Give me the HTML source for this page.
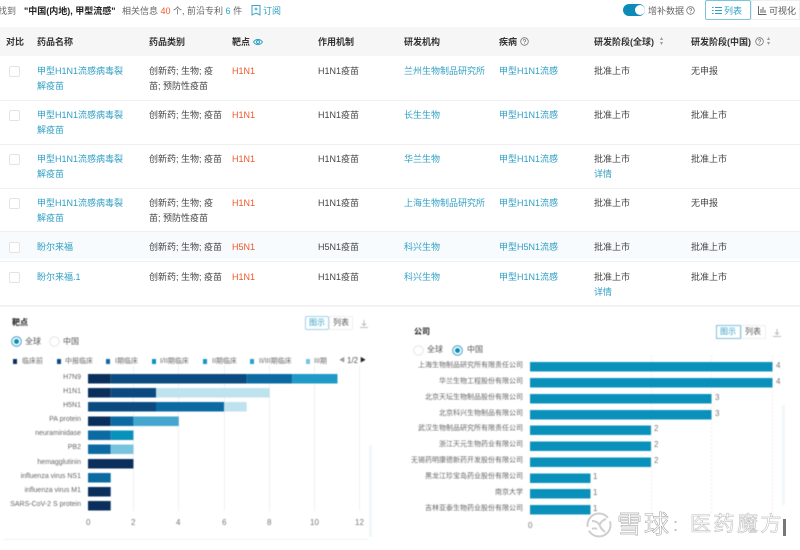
<!DOCTYPE html>
<html lang="zh"><head><meta charset="utf-8">
<style>
html,body{margin:0;padding:0;background:#fff}
body{width:800px;height:550px;overflow:hidden;position:relative;font-family:"Liberation Sans","Noto Sans CJK SC",sans-serif;font-size:9px;color:#444}
.t{position:absolute;white-space:nowrap;line-height:14px;height:14px;font-size:9px;margin-top:1px}
.b{color:#2f9fc4}.k{color:#444}.r{color:#f0562a}.h{font-weight:bold;color:#333}
.bx{position:absolute;box-sizing:border-box;left:9px;width:11px;height:11px;border:1px solid #e3e3e3;border-radius:2px;background:#fff}
.rect{position:absolute}
.c{filter:blur(.4px)}
.c .t{margin-top:0}
.c .t.s{font-size:8px}
.c .t.g{color:#666;font-size:7px;margin-top:1px}
.l{position:absolute;text-align:right;white-space:nowrap;font-size:7px;line-height:10px;color:#666}
.n{position:absolute;white-space:nowrap;font-size:8px;line-height:10px;color:#777}
.q{position:absolute;top:359px;width:4px;height:4.500px}
</style></head><body>

<!-- top bar -->
<div class="t" style="left:-2px;top:3px;color:#666">找到</div>
<div class="t" style="left:24px;top:3px;color:#222;font-weight:bold">"中国(内地), 甲型流感"</div>
<div class="t" style="left:122px;top:3px;color:#666">相关信息 <span style="color:#f0562a">40</span> 个, 前沿专利 <span style="color:#2f9fc4">6</span> 件</div>
<svg style="position:absolute;left:250px;top:4px" width="12" height="12" viewBox="0 0 12 12" fill="none" stroke="#3aa3c8"><path d="M2 1.500h8v9.500l-4-2-4 2z"/><path d="M6 3.500v3M4.500 5h3"/></svg>
<div class="t b" style="left:263px;top:3px">订阅</div>

<div class="rect" style="left:623px;top:4px;width:22px;height:12px;border-radius:6px;background:#0d8bb8"></div>
<div class="rect" style="left:635px;top:5px;width:10px;height:10px;border-radius:5px;background:#fff"></div>
<div class="t" style="left:648px;top:3px;color:#666">增补数据</div>
<svg style="position:absolute;left:686px;top:6px" width="9" height="9" viewBox="0 0 9 9" fill="none" stroke="#777" stroke-width=".8"><circle cx="4.500" cy="4.500" r="3.800"/><path d="M3.300 3.600c0-1.500 2.400-1.500 2.400 0 0 .9-1.200.9-1.200 1.800M4.500 6.200v.7"/></svg>
<div class="rect" style="left:705px;top:0;width:46px;height:20px;box-sizing:border-box;border:1px solid #7cc4dc;border-radius:2px"></div>
<svg style="position:absolute;left:712px;top:6px" width="10" height="9" viewBox="0 0 10 9" fill="none" stroke="#2f9fc4"><path d="M3 1.500h7M3 4.500h7M3 7.500h7M0 1.500h1.500M0 4.500h1.500M0 7.500h1.500"/></svg>
<div class="t b" style="left:724px;top:3px">列表</div>
<div class="rect" style="left:751px;top:0;width:49px;height:20px;box-sizing:border-box;border:1px solid #eee"></div>
<svg style="position:absolute;left:758px;top:6px" width="9" height="9" viewBox="0 0 9 9" fill="none" stroke="#666"><path d="M.5 0v8.500h8M3 3v4M5 1v6M7 4v3"/></svg>
<div class="t" style="left:769px;top:3px;color:#555">可视化</div>

<!-- table header -->
<div class="rect" style="left:0;top:27px;width:800px;height:29px;background:#f6f6f6"></div>
<div class="t h" style="left:6px;top:34px">对比</div>
<div class="t h" style="left:37px;top:34px">药品名称</div>
<div class="t h" style="left:149px;top:34px">药品类别</div>
<div class="t h" style="left:232px;top:34px">靶点</div>
<svg style="position:absolute;left:253px;top:38px" width="10" height="8" viewBox="0 0 10 8" fill="none" stroke="#2f9fc4"><path d="M.5 4C3 .5 7 .5 9.500 4 7 7.500 3 7.500.5 4z"/><circle cx="5" cy="4" r="1.500"/></svg>
<div class="t h" style="left:318px;top:34px">作用机制</div>
<div class="t h" style="left:404px;top:34px">研发机构</div>
<div class="t h" style="left:499px;top:34px">疾病</div>
<svg style="position:absolute;left:520px;top:37px" width="9" height="9" viewBox="0 0 9 9" fill="none" stroke="#777" stroke-width=".8"><circle cx="4.500" cy="4.500" r="3.800"/><path d="M3.300 3.600c0-1.500 2.400-1.500 2.400 0 0 .9-1.200.9-1.200 1.800M4.500 6.200v.7"/></svg>
<div class="t h" style="left:594px;top:34px">研发阶段(全球)</div>
<div class="t" style="left:660px;top:36px;font-size:6px;color:#999;line-height:5px;height:10px">▴<br>▾</div>
<div class="t h" style="left:691px;top:34px">研发阶段(中国)</div>
<svg style="position:absolute;left:755px;top:37px" width="9" height="9" viewBox="0 0 9 9" fill="none" stroke="#777" stroke-width=".8"><circle cx="4.500" cy="4.500" r="3.800"/><path d="M3.300 3.600c0-1.500 2.400-1.500 2.400 0 0 .9-1.200.9-1.200 1.800M4.500 6.200v.7"/></svg>
<div class="t" style="left:767px;top:36px;font-size:6px;color:#999;line-height:5px;height:10px">▴<br>▾</div>

<!-- row backgrounds/lines -->
<div class="rect" style="left:0;top:232px;width:800px;height:27px;background:#f7fbfd"></div>
<div class="rect" style="left:0;top:100px;width:800px;height:1px;background:#f0f0f0"></div>
<div class="rect" style="left:0;top:144px;width:800px;height:1px;background:#f0f0f0"></div>
<div class="rect" style="left:0;top:188px;width:800px;height:1px;background:#f0f0f0"></div>
<div class="rect" style="left:0;top:231px;width:800px;height:1px;background:#f0f0f0"></div>
<div class="rect" style="left:0;top:261px;width:800px;height:1px;background:#f0f0f0"></div>
<div class="rect" style="left:0;top:305px;width:800px;height:2px;background:#f2f2f2"></div>

<!-- row 1 -->
<div class="bx" style="top:66px"></div>
<div class="t b" style="left:37px;top:63px">甲型H1N1流感病毒裂</div><div class="t b" style="left:37px;top:78px">解疫苗</div>
<div class="t k" style="left:149px;top:63px">创新药; 生物; 疫</div><div class="t k" style="left:149px;top:78px">苗; 预防性疫苗</div>
<div class="t r" style="left:232px;top:63px">H1N1</div><div class="t k" style="left:318px;top:63px">H1N1疫苗</div>
<div class="t b" style="left:404px;top:63px">兰州生物制品研究所</div><div class="t b" style="left:499px;top:63px">甲型H1N1流感</div>
<div class="t k" style="left:594px;top:63px">批准上市</div><div class="t k" style="left:691px;top:63px">无申报</div>

<!-- row 2 -->
<div class="bx" style="top:110px"></div>
<div class="t b" style="left:37px;top:107px">甲型H1N1流感病毒裂</div><div class="t b" style="left:37px;top:122px">解疫苗</div>
<div class="t k" style="left:149px;top:107px">创新药; 生物; 疫苗</div>
<div class="t r" style="left:232px;top:107px">H1N1</div><div class="t k" style="left:318px;top:107px">H1N1疫苗</div>
<div class="t b" style="left:404px;top:107px">长生生物</div><div class="t b" style="left:499px;top:107px">甲型H1N1流感</div>
<div class="t k" style="left:594px;top:107px">批准上市</div><div class="t k" style="left:691px;top:107px">批准上市</div>

<!-- row 3 -->
<div class="bx" style="top:154px"></div>
<div class="t b" style="left:37px;top:151px">甲型H1N1流感病毒裂</div><div class="t b" style="left:37px;top:166px">解疫苗</div>
<div class="t k" style="left:149px;top:151px">创新药; 生物; 疫苗</div>
<div class="t r" style="left:232px;top:151px">H1N1</div><div class="t k" style="left:318px;top:151px">H1N1疫苗</div>
<div class="t b" style="left:404px;top:151px">华兰生物</div><div class="t b" style="left:499px;top:151px">甲型H1N1流感</div>
<div class="t k" style="left:594px;top:151px">批准上市</div><div class="t b" style="left:594px;top:166px">详情</div><div class="t k" style="left:691px;top:151px">批准上市</div>

<!-- row 4 -->
<div class="bx" style="top:198px"></div>
<div class="t b" style="left:37px;top:195px">甲型H1N1流感病毒裂</div><div class="t b" style="left:37px;top:210px">解疫苗</div>
<div class="t k" style="left:149px;top:195px">创新药; 生物; 疫</div><div class="t k" style="left:149px;top:210px">苗; 预防性疫苗</div>
<div class="t r" style="left:232px;top:195px">H1N1</div><div class="t k" style="left:318px;top:195px">H1N1疫苗</div>
<div class="t b" style="left:404px;top:195px">上海生物制品研究所</div><div class="t b" style="left:499px;top:195px">甲型H1N1流感</div>
<div class="t k" style="left:594px;top:195px">批准上市</div><div class="t k" style="left:691px;top:195px">无申报</div>

<!-- row 5 -->
<div class="bx" style="top:242px"></div>
<div class="t b" style="left:37px;top:239px">盼尔来福</div>
<div class="t k" style="left:149px;top:239px">创新药; 生物; 疫苗</div>
<div class="t r" style="left:232px;top:239px">H5N1</div><div class="t k" style="left:318px;top:239px">H5N1疫苗</div>
<div class="t b" style="left:404px;top:239px">科兴生物</div><div class="t b" style="left:499px;top:239px">甲型H5N1流感</div>
<div class="t k" style="left:594px;top:239px">批准上市</div><div class="t k" style="left:691px;top:239px">批准上市</div>

<!-- row 6 -->
<div class="bx" style="top:272px"></div>
<div class="t b" style="left:37px;top:269px">盼尔来福.1</div>
<div class="t k" style="left:149px;top:269px">创新药; 生物; 疫苗</div>
<div class="t r" style="left:232px;top:269px">H1N1</div><div class="t k" style="left:318px;top:269px">H1N1疫苗</div>
<div class="t b" style="left:404px;top:269px">科兴生物</div><div class="t b" style="left:499px;top:269px">甲型H1N1流感</div>
<div class="t k" style="left:594px;top:269px">批准上市</div><div class="t b" style="left:594px;top:284px">详情</div><div class="t k" style="left:691px;top:269px">批准上市</div>

<!-- left chart -->
<div class="c">
<div class="t s" style="left:12px;top:316px;color:#222;font-weight:bold">靶点</div>
<div class="rect" style="left:305px;top:316px;width:24px;height:14px;box-sizing:border-box;border:1px solid #9fd3e4;border-radius:2px"></div>
<div class="t s" style="left:309px;top:316px;color:#2f9fc4">图示</div>
<div class="rect" style="left:329px;top:316px;width:24px;height:14px;box-sizing:border-box;border:1px solid #eee"></div>
<div class="t s" style="left:333px;top:316px;color:#555">列表</div>
<svg style="position:absolute;left:360px;top:320px" width="8" height="8" viewBox="0 0 8 8" fill="none" stroke="#bbb"><path d="M4 0v5M2 3.500l2 2 2-2M0 7.500h8"/></svg>
<svg style="position:absolute;left:11px;top:336px" width="11" height="11"><circle cx="5.500" cy="5.500" r="4.800" fill="#fff" stroke="#3aa3c8"/><circle cx="5.500" cy="5.500" r="2.500" fill="#0d8bb8"/></svg>
<div class="t s" style="left:25px;top:335px;color:#555">全球</div>
<svg style="position:absolute;left:49px;top:336px" width="11" height="11"><circle cx="5.500" cy="5.500" r="4.800" fill="#fff" stroke="#e6e6e6"/></svg>
<div class="t s" style="left:63px;top:335px;color:#555">中国</div>

<div class="q" style="left:13px;background:#0b2f5c"></div><div class="t g" style="left:22px;top:354px">临床前</div>
<div class="q" style="left:56.500px;background:#0a4a80"></div><div class="t g" style="left:65px;top:354px">中报临床</div>
<div class="q" style="left:105.500px;background:#0b6aa2"></div><div class="t g" style="left:115px;top:354px">I期临床</div>
<div class="q" style="left:151.500px;background:#0891bb"></div><div class="t g" style="left:160px;top:354px">I/II期临床</div>
<div class="q" style="left:202.500px;background:#1297c5"></div><div class="t g" style="left:212px;top:354px">II期临床</div>
<div class="q" style="left:249.500px;background:#2a9fcb"></div><div class="t g" style="left:259px;top:354px">II/III期临床</div>
<div class="q" style="left:305.500px;background:#78c3de"></div><div class="t g" style="left:314px;top:354px">III期</div>
<div class="t" style="left:339px;top:354px;font-size:6px;color:#999">◀</div>
<div class="t s" style="left:347px;top:354px;color:#555">1/2</div>
<div class="t" style="left:360px;top:354px;font-size:6px;color:#222">▶</div>

<svg style="position:absolute;left:0;top:365px" width="380" height="165" fill="none">
<g stroke="#f0f0f0"><path d="M133.500 0v146M178.500 0v146M224.500 0v146M269.500 0v146M314.500 0v146M359.500 0v146"/></g>
<g>
<rect x="88" y="9" width="22.700" height="9.500" fill="#0b2f5c"/><rect x="110.700" y="9" width="136" height="9.500" fill="#0a4a80"/><rect x="246.700" y="9" width="45.400" height="9.500" fill="#0b6aa2"/><rect x="292.100" y="9" width="45.400" height="9.500" fill="#1f9ac6"/>
<rect x="88" y="23" width="22.700" height="9.500" fill="#0b2f5c"/><rect x="110.700" y="23" width="45.400" height="9.500" fill="#0a4a80"/><rect x="156.100" y="23" width="113.500" height="9.500" fill="#bfe2ef"/>
<rect x="88" y="37" width="68" height="9.500" fill="#0a4a80"/><rect x="156" y="37" width="68" height="9.500" fill="#0b6aa2"/><rect x="224" y="37" width="22.700" height="9.500" fill="#bfe2ef"/>
<rect x="88" y="51.500" width="22.700" height="9.500" fill="#0b2f5c"/><rect x="110.700" y="51.500" width="22.700" height="9.500" fill="#0b6aa2"/><rect x="133.400" y="51.500" width="45.400" height="9.500" fill="#44a6cf"/>
<rect x="88" y="65.500" width="22.700" height="9.500" fill="#0b6aa2"/><rect x="110.700" y="65.500" width="22.700" height="9.500" fill="#0891bb"/>
<rect x="88" y="79.500" width="22.700" height="9.500" fill="#0b6aa2"/><rect x="110.700" y="79.500" width="22.700" height="9.500" fill="#78c3de"/>
<rect x="88" y="94" width="45.400" height="9.500" fill="#0b2f5c"/>
<rect x="88" y="108" width="22.700" height="9.500" fill="#0b6aa2"/>
<rect x="88" y="122" width="22.700" height="9.500" fill="#0b2f5c"/>
<rect x="88" y="136" width="22.700" height="9.500" fill="#0b2f5c"/>
</g></svg>

<div class="l" style="right:719px;top:373px">H7N9</div>
<div class="l" style="right:719px;top:387px">H1N1</div>
<div class="l" style="right:719px;top:401px">H5N1</div>
<div class="l" style="right:719px;top:415px">PA protein</div>
<div class="l" style="right:719px;top:429px">neuraminidase</div>
<div class="l" style="right:719px;top:443px">PB2</div>
<div class="l" style="right:719px;top:458px">hemagglutinin</div>
<div class="l" style="right:719px;top:472px">influenza virus NS1</div>
<div class="l" style="right:719px;top:486px">influenza virus M1</div>
<div class="l" style="right:719px;top:500px">SARS-CoV-2 S protein</div>
<div class="n" style="left:86px;top:518px">0</div><div class="n" style="left:131px;top:518px">2</div><div class="n" style="left:176px;top:518px">4</div><div class="n" style="left:222px;top:518px">6</div><div class="n" style="left:267px;top:518px">8</div><div class="n" style="left:310px;top:518px">10</div><div class="n" style="left:355px;top:518px">12</div>
<div class="rect" style="left:4px;top:539px;width:365px;height:1px;background:#f2f2f2"></div>
<div class="rect" style="left:369px;top:445px;width:3px;height:92px;background:#f0f7fb"></div>

<!-- right chart -->
<div class="t s" style="left:414px;top:325px;color:#222;font-weight:bold">公司</div>
<div class="rect" style="left:716px;top:325px;width:25px;height:14px;box-sizing:border-box;border:1px solid #7cc4dc"></div>
<div class="t s" style="left:720px;top:325px;color:#2f9fc4">图示</div>
<div class="rect" style="left:741px;top:325px;width:25px;height:14px;box-sizing:border-box;border:1px solid #eee"></div>
<div class="t s" style="left:745px;top:325px;color:#555">列表</div>
<svg style="position:absolute;left:773px;top:329px" width="8" height="8" viewBox="0 0 8 8" fill="none" stroke="#bbb"><path d="M4 0v5M2 3.500l2 2 2-2M0 7.500h8"/></svg>
<svg style="position:absolute;left:413px;top:345px" width="11" height="11"><circle cx="5.500" cy="5.500" r="4.800" fill="#fff" stroke="#e6e6e6"/></svg>
<div class="t s" style="left:427px;top:343px;color:#555">全球</div>
<svg style="position:absolute;left:452px;top:345px" width="11" height="11"><circle cx="5.500" cy="5.500" r="4.800" fill="#fff" stroke="#3aa3c8"/><circle cx="5.500" cy="5.500" r="2.500" fill="#0d8bb8"/></svg>
<div class="t s" style="left:467px;top:343px;color:#555">中国</div>

<svg style="position:absolute;left:520px;top:355px" width="280" height="170" fill="none">
<g stroke="#eee" stroke-dasharray="2 2"><path d="M131.500 0v160M191.500 0v160M252.500 0v160"/></g>
<g fill="#0a91bb">
<rect x="10" y="7" width="242.500" height="9.500"/><rect x="10" y="23" width="242.500" height="9.500"/>
<rect x="10" y="39" width="181.500" height="9.500"/><rect x="10" y="55" width="181.500" height="9.500"/>
<rect x="10" y="70.500" width="121" height="9.500"/><rect x="10" y="86.500" width="121" height="9.500"/><rect x="10" y="102.500" width="121" height="9.500"/>
<rect x="10" y="118.500" width="60.500" height="9.500"/><rect x="10" y="134" width="60.500" height="9.500"/><rect x="10" y="150" width="60.500" height="9.500"/>
</g></svg>
<div class="l" style="right:277px;top:361px">上海生物制品研究所有限责任公司</div>
<div class="l" style="right:277px;top:377px">华兰生物工程股份有限公司</div>
<div class="l" style="right:277px;top:393px">北京天坛生物制品股份有限公司</div>
<div class="l" style="right:277px;top:409px">北京科兴生物制品有限公司</div>
<div class="l" style="right:277px;top:424px">武汉生物制品研究所有限责任公司</div>
<div class="l" style="right:277px;top:440px">浙江天元生物药业有限公司</div>
<div class="l" style="right:277px;top:456px">无锡药明康德新药开发股份有限公司</div>
<div class="l" style="right:277px;top:472px">黑龙江珍宝岛药业股份有限公司</div>
<div class="l" style="right:277px;top:488px">南京大学</div>
<div class="l" style="right:277px;top:504px">吉林亚泰生物药业股份有限公司</div>
<div class="n" style="left:776px;top:361px">4</div><div class="n" style="left:776px;top:377px">4</div>
<div class="n" style="left:715px;top:393px">3</div><div class="n" style="left:715px;top:409px">3</div>
<div class="n" style="left:654px;top:424px">2</div><div class="n" style="left:654px;top:440px">2</div><div class="n" style="left:654px;top:456px">2</div>
<div class="n" style="left:593px;top:472px">1</div><div class="n" style="left:593px;top:488px">1</div><div class="n" style="left:593px;top:504px">1</div>
<div class="n" style="left:528px;top:521px">0</div>
<div class="rect" style="left:782px;top:405px;width:3px;height:100px;background:#f0f7fb"></div>
</div>

<!-- watermark -->
<svg style="position:absolute;left:585px;top:511px" width="28" height="28" viewBox="0 0 28 28" fill="none" stroke="#cfcfcf" stroke-width="2"><circle cx="14" cy="14" r="11.500" stroke-dasharray="30 4"/><path d="M7 10c4 0 7 2 8 5s3 4 5 6M21 8c-3 1-5 3-6 5M7 18c2-1 3-1 5 0"/></svg>
<div class="t" style="left:617px;top:509px;height:30px;line-height:30px;font-size:25px;color:#fff;-webkit-text-stroke:.6px #aaa;letter-spacing:2px">雪球</div>
<div class="t" style="left:673px;top:509px;height:30px;line-height:30px;font-size:18px;color:#b8b8b8">:</div>
<div class="t" style="left:690px;top:509px;height:30px;line-height:30px;font-size:21px;color:#fff;-webkit-text-stroke:.6px #c0c0c0;letter-spacing:2.500px">医药魔方</div>
<div class="rect" style="left:783px;top:519px;width:3px;height:17px;background:#777"></div>
</body></html>
